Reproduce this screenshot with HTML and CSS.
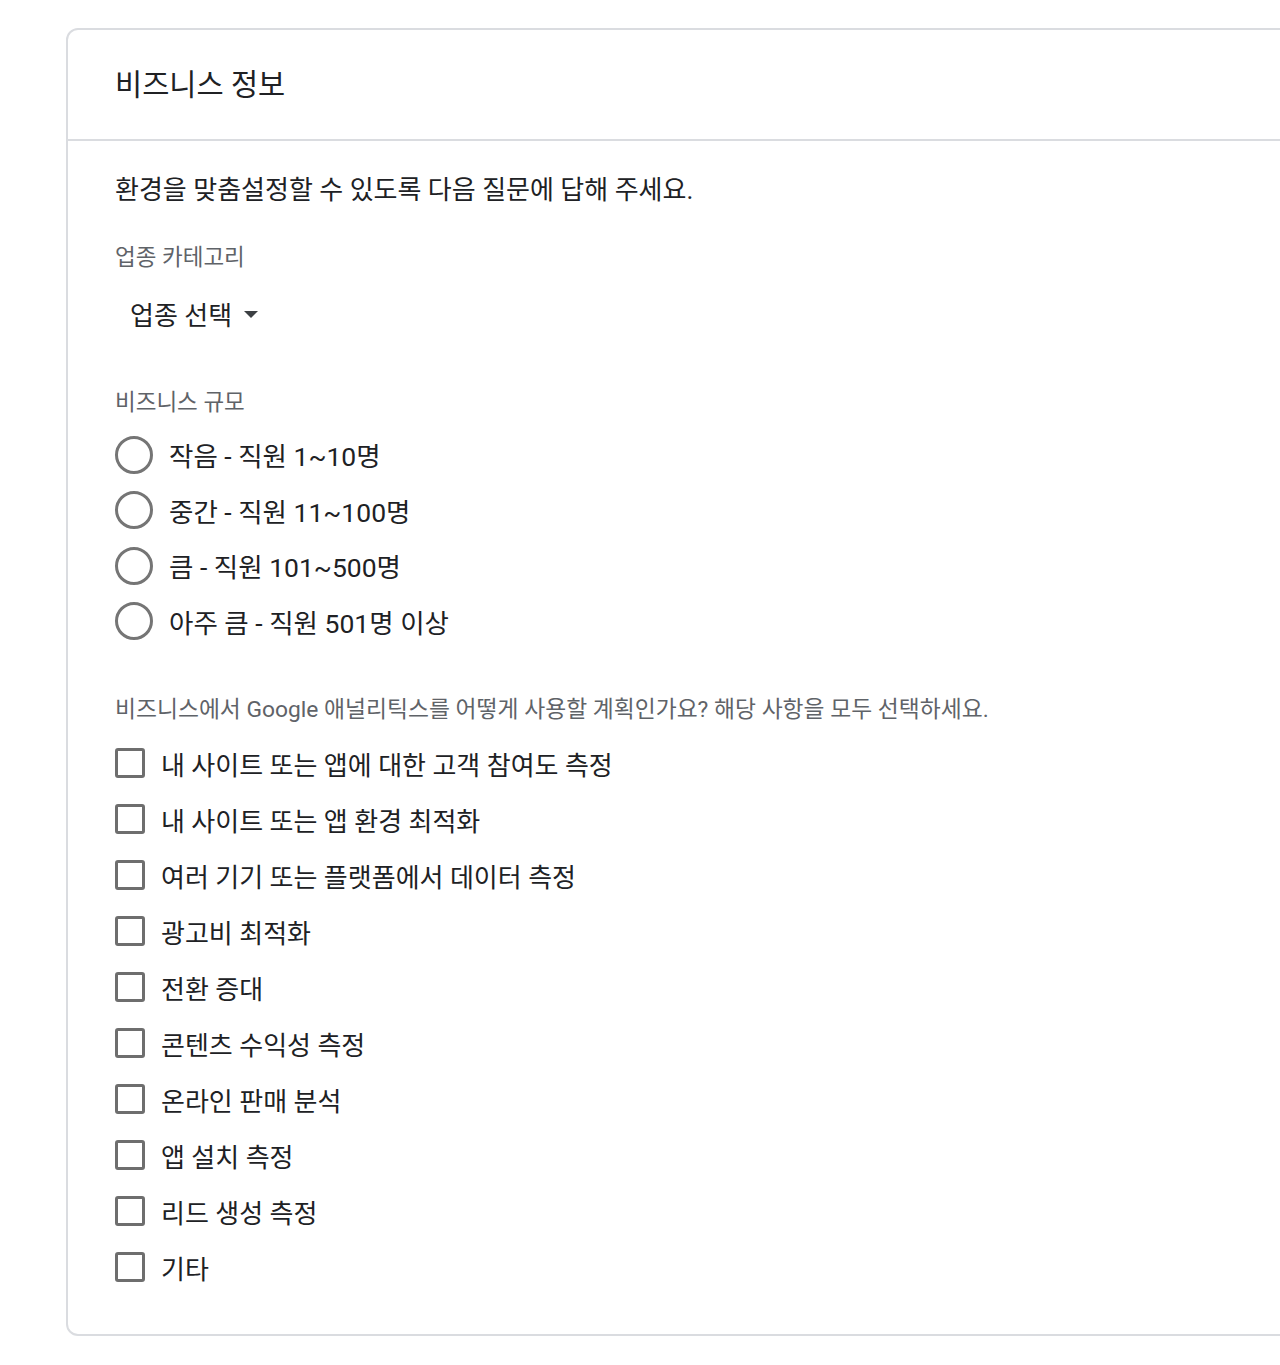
FILE: index.html
```html
<!DOCTYPE html>
<html lang="ko">
<head>
  <meta charset="UTF-8">
  <title>비즈니스 정보</title>
  <link rel="stylesheet" href="styles.css">
</head>
<body>
  <div class="card">
    <div class="card-header">
      <h2 class="card-title">비즈니스 정보</h2>
    </div>
    <div class="card-body">
      <p class="intro">환경을 맞춤설정할 수 있도록 다음 질문에 답해 주세요.</p>

      <div class="field-label">업종 카테고리</div>
      <div class="dropdown">
        <span>업종 선택</span>
        <span class="caret"></span>
      </div>

      <div class="field-label label-gap">비즈니스 규모</div>
      <div class="option-list">
        <label class="option"><span class="radio"></span><span>작음 - 직원 1~10명</span></label>
        <label class="option"><span class="radio"></span><span>중간 - 직원 11~100명</span></label>
        <label class="option"><span class="radio"></span><span>큼 - 직원 101~500명</span></label>
        <label class="option"><span class="radio"></span><span>아주 큼 - 직원 501명 이상</span></label>
      </div>

      <div class="field-label label-gap-2">비즈니스에서 Google 애널리틱스를 어떻게 사용할 계획인가요? 해당 사항을 모두 선택하세요.</div>
      <div class="option-list checks">
        <label class="option"><span class="checkbox"></span><span>내 사이트 또는 앱에 대한 고객 참여도 측정</span></label>
        <label class="option"><span class="checkbox"></span><span>내 사이트 또는 앱 환경 최적화</span></label>
        <label class="option"><span class="checkbox"></span><span>여러 기기 또는 플랫폼에서 데이터 측정</span></label>
        <label class="option"><span class="checkbox"></span><span>광고비 최적화</span></label>
        <label class="option"><span class="checkbox"></span><span>전환 증대</span></label>
        <label class="option"><span class="checkbox"></span><span>콘텐츠 수익성 측정</span></label>
        <label class="option"><span class="checkbox"></span><span>온라인 판매 분석</span></label>
        <label class="option"><span class="checkbox"></span><span>앱 설치 측정</span></label>
        <label class="option"><span class="checkbox"></span><span>리드 생성 측정</span></label>
        <label class="option"><span class="checkbox"></span><span>기타</span></label>
      </div>
    </div>
  </div>
</body>
</html>
```

FILE: styles.css
```css
* {
  margin: 0;
  padding: 0;
  box-sizing: border-box;
}

body {
  font-family: Roboto, "Noto Sans CJK KR", sans-serif;
  background: #fff;
  color: #202124;
  overflow-x: hidden;
  padding: 28px 0 0 66px;
}

.card {
  width: 1260px;
  border: 2px solid #dadce0;
  border-radius: 12px;
  background: #fff;
}

.card-header {
  height: 111px;
  display: flex;
  align-items: center;
  padding-left: 47px;
  padding-bottom: 6px;
  border-bottom: 2px solid #dadce0;
}

.card-title {
  font-size: 29.5px;
  font-weight: 400;
  color: #202124;
}

.card-body {
  padding: 33px 47px 39px;
}

.intro {
  font-size: 26px;
  line-height: 32px;
  margin-bottom: 37px;
}

.field-label {
  font-size: 22.5px;
  line-height: 28px;
  color: #5f6368;
}

.label-gap {
  margin-top: 51px;
}

.label-gap-2 {
  margin-top: 47px;
  font-size: 22.8px;
}

.dropdown {
  display: flex;
  align-items: center;
  gap: 12px;
  height: 48px;
  margin-top: 18px;
  padding-left: 15px;
  font-size: 26px;
}

.caret {
  width: 0;
  height: 0;
  border-left: 7px solid transparent;
  border-right: 7px solid transparent;
  border-top: 7px solid #3c4043;
  margin-top: 3px;
}

.option-list {
  margin-top: 11px;
}

.option {
  display: flex;
  align-items: center;
  height: 55.5px;
  font-size: 26.5px;
  gap: 16px;
}

.checks {
  margin-top: 11px;
}

.checks .option {
  height: 56px;
  font-size: 26px;
}

.radio {
  width: 38px;
  height: 38px;
  border: 3px solid #757575;
  border-radius: 50%;
  flex-shrink: 0;
}

.checkbox {
  width: 30px;
  height: 30px;
  border: 3px solid #6e6e6e;
  border-radius: 3px;
  flex-shrink: 0;
}
```
